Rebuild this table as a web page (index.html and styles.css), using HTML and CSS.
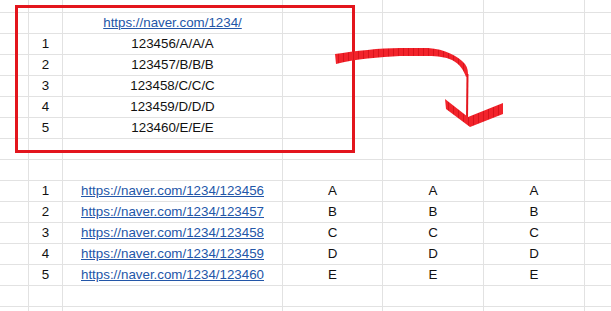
FILE: index.html
```html
<!DOCTYPE html>
<html lang="en">
<head>
    <meta charset="UTF-8">
    <meta name="viewport" content="width=device-width, initial-scale=1.0">
    <title>URL split</title>
    <link rel="stylesheet" href="styles.css">
</head>
<body>
    <div class="page">
        <div class="sheet">
            <div class="row top"><div></div><div></div><div></div><div></div><div></div><div></div><div></div></div>

            <!-- base url and the raw values -->
            <div class="row"><div></div><div></div><div><a href="#">https://naver.com/1234/</a></div><div></div><div></div><div></div><div></div></div>
            <div class="row"><div></div><div>1</div><div>123456/A/A/A</div><div></div><div></div><div></div><div></div></div>
            <div class="row"><div></div><div>2</div><div>123457/B/B/B</div><div></div><div></div><div></div><div></div></div>
            <div class="row"><div></div><div>3</div><div>123458/C/C/C</div><div></div><div></div><div></div><div></div></div>
            <div class="row"><div></div><div>4</div><div>123459/D/D/D</div><div></div><div></div><div></div><div></div></div>
            <div class="row"><div></div><div>5</div><div>123460/E/E/E</div><div></div><div></div><div></div><div></div></div>
            <div class="row"><div></div><div></div><div></div><div></div><div></div><div></div><div></div></div>
            <div class="row"><div></div><div></div><div></div><div></div><div></div><div></div><div></div></div>

            <!-- split result -->
            <div class="row"><div></div><div>1</div><div><a href="#">https://naver.com/1234/123456</a></div><div>A</div><div>A</div><div>A</div><div></div></div>
            <div class="row"><div></div><div>2</div><div><a href="#">https://naver.com/1234/123457</a></div><div>B</div><div>B</div><div>B</div><div></div></div>
            <div class="row"><div></div><div>3</div><div><a href="#">https://naver.com/1234/123458</a></div><div>C</div><div>C</div><div>C</div><div></div></div>
            <div class="row"><div></div><div>4</div><div><a href="#">https://naver.com/1234/123459</a></div><div>D</div><div>D</div><div>D</div><div></div></div>
            <div class="row"><div></div><div>5</div><div><a href="#">https://naver.com/1234/123460</a></div><div>E</div><div>E</div><div>E</div><div></div></div>
            <div class="row"><div></div><div></div><div></div><div></div><div></div><div></div><div></div></div>
            <div class="row"><div></div><div></div><div></div><div></div><div></div><div></div><div></div></div>
        </div>

        <!-- marker box round the source block -->
        <div class="highlight"></div>

        <!-- brush arrow pointing down to the result -->
        <svg class="arrow" width="611" height="311" viewBox="0 0 611 311">
            <defs>
                <pattern id="brush" width="5" height="10" patternUnits="userSpaceOnUse">
                    <rect width="5" height="10" fill="#f2232b"/>
                    <rect x="3" width="1" height="10" fill="#d8141c"/>
                </pattern>
            </defs>
            <path fill="url(#brush)" d="M335,54 C355,51 380,48 400,48 L428,48 C445,49 458,56 465,64 C468,68 468,72 468,76 L466,77 C464,71 460,64 452,60 C445,57 438,56 428,56 L400,56 C380,57 355,59 336,64 Z"/>
            <path d="M467.5,74 L467,119" stroke="#e3161e" stroke-width="2" fill="none"/>
            <polygon fill="url(#brush)" points="445,99 468,117 503,103 503,114 470,127 446,109"/>
        </svg>
    </div>
</body>
</html>
```

FILE: styles.css
```css
body {
    margin: 0;
    overflow: hidden;
    background-color: #fff;
}
.page {
    position: relative;
    width: 611px;
    height: 311px;
}
.sheet {
    display: grid;
    grid-template-columns: 28px 33px 219px 99px 100px 100px 1fr;
    grid-template-rows: 12px repeat(14, 20px) 1fr;
    gap: 1px;
    height: 311px;
    background-color: #e2e2e2;
    font-family: "Liberation Sans", Arial, sans-serif;
    font-size: 13.33px;
    color: #111;
}
.row {
    display: contents;
}
.row > div {
    background-color: #fff;
    line-height: 20px;
    text-align: center;
    white-space: nowrap;
    overflow: hidden;
}
.sheet a {
    color: #2356a8;
    text-decoration: underline;
}
.highlight {
    position: absolute;
    left: 15px;
    top: 5px;
    width: 334px;
    height: 142px;
    border: 3px solid #e3151d;
}
.arrow {
    position: absolute;
    left: 0;
    top: 0;
    pointer-events: none;
}
```
